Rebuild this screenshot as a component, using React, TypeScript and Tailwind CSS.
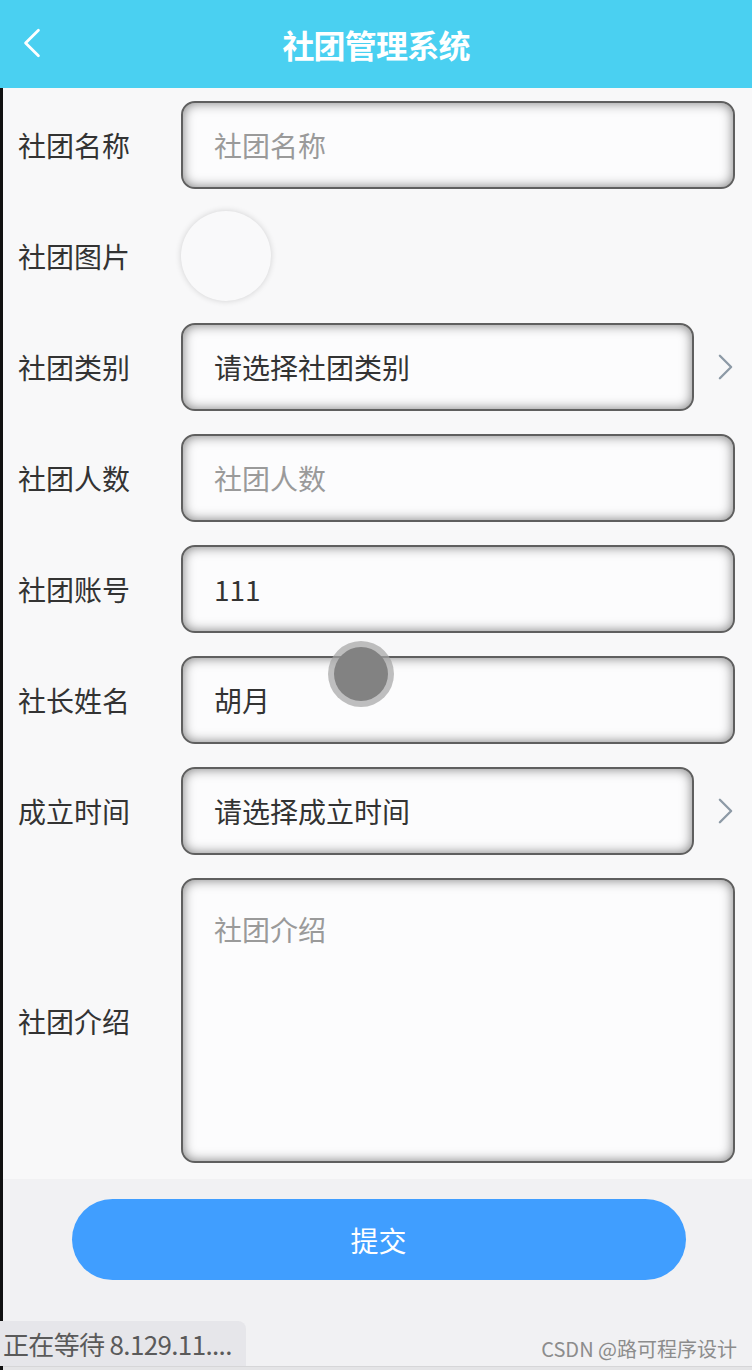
import React from 'react';

const font = { fontFamily: '"Noto Sans CJK SC", "Noto Sans", sans-serif' };

const Chevron: React.FC<{ className?: string; stroke?: string; width?: number }> = ({ className, stroke = '#8d9aa6', width = 2.5 }) => (
  <svg viewBox="0 0 16 28" className={className} fill="none">
    <polyline points="2,2 14,14 2,26" stroke={stroke} strokeWidth={width} strokeLinecap="round" strokeLinejoin="round" />
  </svg>
);

const boxClass =
  'flex-1 h-[88px] rounded-[14px] border-2 border-[#5f5f5f] bg-[#fcfcfd] shadow-[inset_0_0_12px_rgba(0,0,0,0.5)] flex items-center pl-[31px] text-[28px]';

interface RowProps {
  label: string;
  children: React.ReactNode;
}

const Row: React.FC<RowProps> = ({ label, children }) => (
  <div className="flex items-center h-[111px] pl-[15px] pr-[17px]">
    <div className="w-[163px] text-[28px] text-[#333]">{label}</div>
    {children}
  </div>
);

const Field: React.FC<{ text: string; placeholder?: boolean }> = ({ text, placeholder }) => (
  <div className={boxClass}>
    <span className={placeholder ? 'text-[#9a9a9a]' : 'text-[#333]'}>{text}</span>
  </div>
);

const SelectField: React.FC<{ text: string }> = ({ text }) => (
  <div className="flex-1 flex items-center -mr-[17px]">
    <div className={boxClass}>
      <span className="text-[#333]">{text}</span>
    </div>
    <div className="w-[58px] flex justify-center pl-[5px]">
      <Chevron className="w-[15px] h-[28px]" />
    </div>
  </div>
);

export default function App() {
  return (
    <div className="w-[752px] h-[1370px] flex flex-col bg-white relative overflow-hidden" style={font}>
      {/* header */}
      <div className="h-[88px] bg-[#4ad0f1] flex items-center relative shrink-0">
        <div className="absolute left-[22px] top-[28px]">
          <Chevron className="w-[20px] h-[30px] rotate-180" stroke="#ffffff" width={2.6} />
        </div>
        <div className="flex-1 text-center text-white text-[32px] font-bold tracking-tight">社团管理系统</div>
      </div>

      <div className="flex-1 flex flex-col border-l-[3px] border-[#111]">
        {/* form body */}
        <div className="bg-[#f8f8f9] pt-[1px] pb-[16px]">
          <Row label="社团名称">
            <Field text="社团名称" placeholder />
          </Row>
          <Row label="社团图片">
            <div className="w-[90px] h-[90px] rounded-full bg-[#f9f9fa] shadow-[0_0_6px_rgba(0,0,0,0.16)]" />
          </Row>
          <Row label="社团类别">
            <SelectField text="请选择社团类别" />
          </Row>
          <Row label="社团人数">
            <Field text="社团人数" placeholder />
          </Row>
          <Row label="社团账号">
            <Field text="111" />
          </Row>
          <Row label="社长姓名">
            <Field text="胡月" />
          </Row>
          <Row label="成立时间">
            <SelectField text="请选择成立时间" />
          </Row>
          <div className="flex items-center pl-[15px] pr-[17px] mt-[12px]">
            <div className="w-[163px] text-[28px] text-[#333]">社团介绍</div>
            <div className="flex-1 h-[285px] rounded-[14px] border-2 border-[#5f5f5f] bg-[#fcfcfd] shadow-[inset_0_0_12px_rgba(0,0,0,0.5)] pl-[31px] pt-[35px] text-[28px] text-[#9a9a9a] leading-none">
              社团介绍
            </div>
          </div>
        </div>

        {/* footer */}
        <div className="flex-1 bg-[#f1f1f3] pt-[20px]">
          <div className="mx-auto w-[614px] h-[81px] rounded-full bg-[#409eff] flex items-center justify-center text-white text-[28px] translate-x-[1px]">
            提交
          </div>
        </div>
        <div className="h-[4px] bg-[#e4e4e6] border-t border-[#d6d6d8]" />
      </div>

      {/* press indicator */}
      <div className="absolute left-[328px] top-[641px] w-[66px] h-[66px] rounded-full bg-[#a4a4a4]/70 flex items-center justify-center">
        <div className="w-[54px] h-[54px] rounded-full bg-[#828282]" />
      </div>

      {/* status tooltip */}
      <div className="absolute left-0 bottom-[4px] h-[45px] w-[246px] bg-[#e6e6ea] rounded-tr-[8px] flex items-center pl-[3px] text-[26px] text-[#5a5a5a] tracking-tight">
        正在等待 8.129.11....
      </div>

      {/* watermark */}
      <div className="absolute right-[15px] bottom-[6px] text-[20px] text-[#8c8c8c]">CSDN @路可程序设计</div>
    </div>
  );
}
